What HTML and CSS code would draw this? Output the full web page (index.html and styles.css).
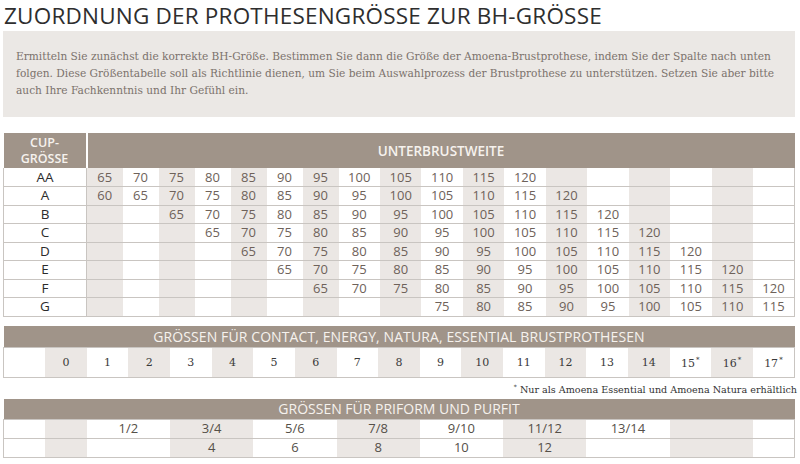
FILE: index.html
```html
<!DOCTYPE html>
<html lang="de">
<head>
<meta charset="utf-8">
<title>Zuordnung der Prothesengröße zur BH-Größe</title>
<link rel="stylesheet" href="styles.css">
</head>
<body>
<div class="page">
  <h1 class="title">ZUORDNUNG DER PROTHESENGRÖSSE ZUR BH-GRÖSSE</h1>
  <div class="intro">
    <p>Ermitteln Sie zunächst die korrekte BH-Größe. Bestimmen Sie dann die Größe der Amoena-Brustprothese, indem Sie der Spalte nach unten folgen. Diese Größentabelle soll als Richtlinie dienen, um Sie beim Auswahlprozess der Brustprothese zu unterstützen. Setzen Sie aber bitte auch Ihre Fachkenntnis und Ihr Gefühl ein.</p>
  </div>

  <table class="tbl cup">
    <colgroup>
      <col class="c-label">
      <col class="c-s"><col class="c-s"><col class="c-s"><col class="c-s"><col class="c-s"><col class="c-s"><col class="c-s">
      <col><col><col><col><col><col><col><col><col><col><col>
    </colgroup>
    <thead>
      <tr><th class="lab-head"><span class="hl">CUP-</span><span class="hl hl2">GRÖSSE</span></th><th colspan="18" class="span-head">UNTERBRUSTWEITE</th></tr>
    </thead>
    <tbody>
      <tr><th>AA</th><td>65</td><td>70</td><td>75</td><td>80</td><td>85</td><td>90</td><td>95</td><td>100</td><td>105</td><td>110</td><td>115</td><td>120</td><td></td><td></td><td></td><td></td><td></td><td></td></tr>
      <tr><th>A</th><td>60</td><td>65</td><td>70</td><td>75</td><td>80</td><td>85</td><td>90</td><td>95</td><td>100</td><td>105</td><td>110</td><td>115</td><td>120</td><td></td><td></td><td></td><td></td><td></td></tr>
      <tr><th>B</th><td></td><td></td><td>65</td><td>70</td><td>75</td><td>80</td><td>85</td><td>90</td><td>95</td><td>100</td><td>105</td><td>110</td><td>115</td><td>120</td><td></td><td></td><td></td><td></td></tr>
      <tr><th>C</th><td></td><td></td><td></td><td>65</td><td>70</td><td>75</td><td>80</td><td>85</td><td>90</td><td>95</td><td>100</td><td>105</td><td>110</td><td>115</td><td>120</td><td></td><td></td><td></td></tr>
      <tr><th>D</th><td></td><td></td><td></td><td></td><td>65</td><td>70</td><td>75</td><td>80</td><td>85</td><td>90</td><td>95</td><td>100</td><td>105</td><td>110</td><td>115</td><td>120</td><td></td><td></td></tr>
      <tr><th>E</th><td></td><td></td><td></td><td></td><td></td><td>65</td><td>70</td><td>75</td><td>80</td><td>85</td><td>90</td><td>95</td><td>100</td><td>105</td><td>110</td><td>115</td><td>120</td><td></td></tr>
      <tr><th>F</th><td></td><td></td><td></td><td></td><td></td><td></td><td>65</td><td>70</td><td>75</td><td>80</td><td>85</td><td>90</td><td>95</td><td>100</td><td>105</td><td>110</td><td>115</td><td>120</td></tr>
      <tr><th>G</th><td></td><td></td><td></td><td></td><td></td><td></td><td></td><td></td><td></td><td>75</td><td>80</td><td>85</td><td>90</td><td>95</td><td>100</td><td>105</td><td>110</td><td>115</td></tr>
    </tbody>
  </table>

  <table class="tbl sizes">
    <thead>
      <tr><th colspan="19" class="span-head">GRÖSSEN FÜR CONTACT, ENERGY, NATURA, ESSENTIAL BRUSTPROTHESEN</th></tr>
    </thead>
    <tbody>
      <tr><td></td><td>0</td><td>1</td><td>2</td><td>3</td><td>4</td><td>5</td><td>6</td><td>7</td><td>8</td><td>9</td><td>10</td><td>11</td><td>12</td><td>13</td><td>14</td><td>15<sup>*</sup></td><td>16<sup>*</sup></td><td>17<sup>*</sup></td></tr>
    </tbody>
  </table>
  <p class="note"><sup>*</sup> Nur als Amoena Essential und Amoena Natura erhältlich</p>

  <table class="tbl pri">
    <colgroup>
      <col><col><col><col><col><col><col><col><col><col><col><col><col><col><col><col><col><col><col>
    </colgroup>
    <thead>
      <tr><th colspan="19" class="span-head">GRÖSSEN FÜR PRIFORM UND PURFIT</th></tr>
    </thead>
    <tbody>
      <tr><td class="w"></td><td class="g"></td><td class="w" colspan="2">1/2</td><td class="g" colspan="2">3/4</td><td class="w" colspan="2">5/6</td><td class="g" colspan="2">7/8</td><td class="w" colspan="2">9/10</td><td class="g" colspan="2">11/12</td><td class="w" colspan="2">13/14</td><td class="g" colspan="2"></td><td class="w"></td></tr>
      <tr><td class="w"></td><td class="g"></td><td class="w" colspan="2"></td><td class="g" colspan="2">4</td><td class="w" colspan="2">6</td><td class="g" colspan="2">8</td><td class="w" colspan="2">10</td><td class="g" colspan="2">12</td><td class="w" colspan="2"></td><td class="g" colspan="2"></td><td class="w"></td></tr>
    </tbody>
  </table>
</div>
</body>
</html>
```

FILE: styles.css
```css
* { box-sizing: border-box; }
html, body { margin: 0; padding: 0; background: #ffffff; }

.page {
  width: 800px;
  padding: 0 5px 0 3px;
}

.title {
  margin: 0;
  height: 31px;
  padding: 2px 0 0 1px;
  font-family: "Open Sans", "DejaVu Sans", sans-serif;
  font-weight: 400;
  font-size: 22.5px;
  line-height: 27px;
  color: #2e2e2e;
  letter-spacing: 0.2px;
  white-space: nowrap;
}

.intro {
  background: #ebe8e5;
  height: 86px;
  padding: 17px 13px 0 13px;
}
.intro p {
  margin: 0;
  font-family: "DejaVu Serif", "Liberation Serif", serif;
  font-size: 10.6px;
  line-height: 17px;
  color: #7b726c;
}

.tbl {
  width: 792px;
  border-collapse: collapse;
  table-layout: fixed;
  font-family: "Open Sans", "DejaVu Sans", sans-serif;
}
.tbl td, .tbl th { padding: 0; text-align: center; }

.span-head {
  background: #a09489;
  color: #f6f2ee;
  font-weight: 600;
}

.cup { margin-top: 16px; }
.cup .c-label { width: 83px; }
.cup .c-s { width: 36px; }
.cup thead th {
  height: 35px;
  background: #a09489;
  color: #f6f2ee;
  font-size: 12.5px;
  font-weight: 600;
  line-height: 14px;
}
.cup thead .hl { display: block; }
.cup thead .hl2 { margin-top: 2px; }
.cup thead .lab-head { border-right: 2px solid #ffffff; }
.cup thead .span-head { font-size: 13.5px; }
.cup tbody tr { height: 18.5px; border-bottom: 1px solid #c9c5c1; }
.cup tbody th {
  font-size: 13.5px;
  font-weight: 500;
  color: #2b2b2b;
  border-left: 1px solid #c9c5c1;
  border-right: 1px solid #c9c5c1;
  line-height: 17px;
}
.cup tbody td {
  font-size: 13px;
  color: #6e625a;
  line-height: 17px;
}
.cup tbody td:nth-of-type(odd) { background: #ebe7e4; }
.cup tbody td:last-child { border-right: 1px solid #c9c5c1; }

.sizes { margin-top: 9px; }
.sizes thead th {
  height: 22px;
  font-size: 14px;
  font-weight: 500;
  letter-spacing: 0.1px;
}
.sizes tbody tr { height: 30px; border: 1px solid #c9c5c1; }
.sizes tbody td {
  font-family: "DejaVu Serif", "Liberation Serif", serif;
  font-size: 11px;
  font-weight: 400;
  color: #3a3a3a;
}
.sizes tbody td:nth-child(even) { background: #ebe7e4; }
.sizes sup { font-size: 7px; vertical-align: 5px; margin-left: 1px; }

.note {
  margin: 0;
  height: 21px;
  padding-top: 2px;
  text-align: right;
  font-family: "DejaVu Serif", "Liberation Serif", serif;
  font-size: 9.6px;
  line-height: 14px;
  color: #333333;
  margin-right: -2px;
}
.note sup { font-size: 6px; vertical-align: 4px; }

.pri thead th {
  height: 20px;
  font-size: 14px;
  font-weight: 500;
}
.pri tbody tr { height: 19px; border: 1px solid #c9c5c1; }
.pri tbody td {
  font-size: 13px;
  color: #555049;
  line-height: 17px;
}
.pri tbody td.g { background: #ebe7e4; }
.pri tbody td.w { background: #ffffff; }
```
